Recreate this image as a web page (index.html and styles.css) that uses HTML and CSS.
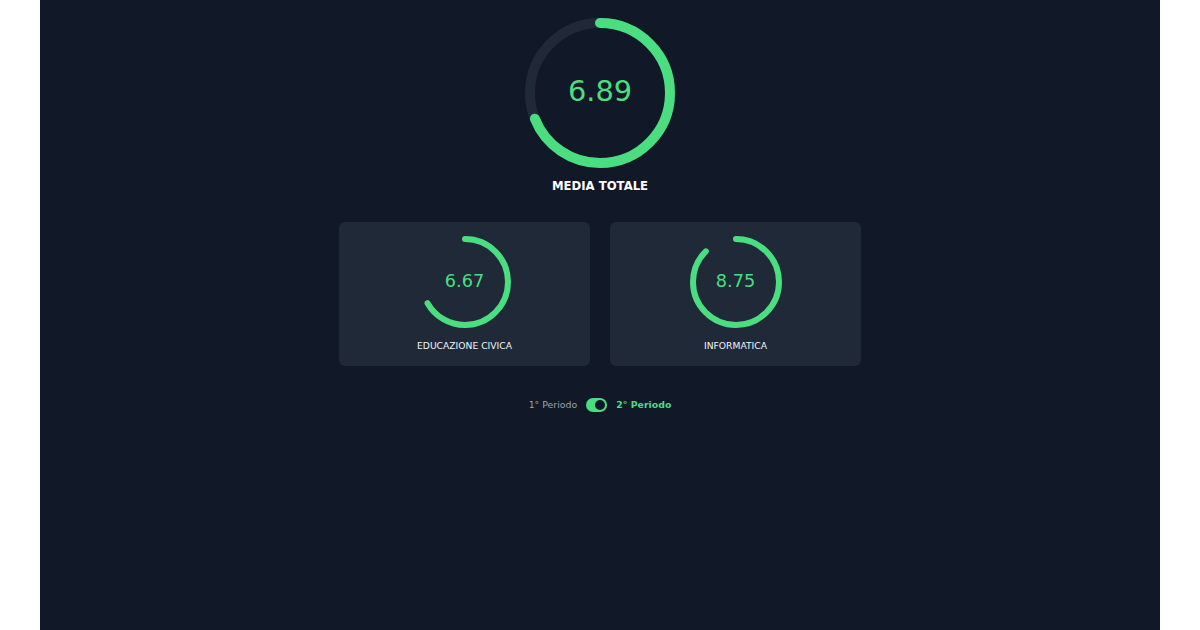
FILE: index.html
```html
<!DOCTYPE html>
<html lang="it">
<head>
<meta charset="utf-8">
<title>Media</title>
<link rel="stylesheet" href="styles.css">
</head>
<body>
<main class="app">
  <section class="total">
    <div class="ring ring-big">
      <svg width="150" height="150" viewBox="0 0 150 150">
        <circle class="track" cx="75" cy="75" r="70" stroke-width="10" fill="none"/>
        <circle class="bar" cx="75" cy="75" r="70" stroke-width="10" fill="none" stroke-dasharray="303.04 439.82" transform="rotate(-90 75 75)"/>
      </svg>
      <span class="value value-big">6.89</span>
    </div>
    <div class="total-label">MEDIA TOTALE</div>
  </section>

  <section class="cards">
    <div class="card">
      <div class="ring ring-small">
        <svg width="94" height="94" viewBox="0 0 94 94">
          <circle class="track-card" cx="47" cy="47" r="43" stroke-width="6" fill="none"/>
          <circle class="bar" cx="47" cy="47" r="43" stroke-width="6" fill="none" stroke-dasharray="180.2 270.18" transform="rotate(-90 47 47)"/>
        </svg>
        <span class="value value-small">6.67</span>
      </div>
      <div class="card-label">EDUCAZIONE CIVICA</div>
    </div>
    <div class="card">
      <div class="ring ring-small">
        <svg width="94" height="94" viewBox="0 0 94 94">
          <circle class="track-card" cx="47" cy="47" r="43" stroke-width="6" fill="none"/>
          <circle class="bar" cx="47" cy="47" r="43" stroke-width="6" fill="none" stroke-dasharray="236.4 270.18" transform="rotate(-90 47 47)"/>
        </svg>
        <span class="value value-small">8.75</span>
      </div>
      <div class="card-label">INFORMATICA</div>
    </div>
  </section>

  <section class="period">
    <span class="period-off">1° Periodo</span>
    <span class="switch"><span class="knob"></span></span>
    <span class="period-on">2° Periodo</span>
  </section>
</main>
</body>
</html>
```

FILE: styles.css
```css
html, body {
  margin: 0;
  padding: 0;
  background: #ffffff;
}

body {
  font-family: "DejaVu Sans", "Liberation Sans", sans-serif;
}

.app {
  width: 1120px;
  min-height: 630px;
  margin: 0 auto;
  background: #111827;
  display: flex;
  flex-direction: column;
  align-items: center;
  padding-top: 18px;
  box-sizing: border-box;
}

.total {
  display: flex;
  flex-direction: column;
  align-items: center;
}

.ring {
  position: relative;
  display: flex;
  align-items: center;
  justify-content: center;
}

.ring svg {
  display: block;
}

.track {
  stroke: #1f2937;
}

.track-card {
  stroke: #1f2937;
}

.bar {
  stroke: #4ade80;
  stroke-linecap: round;
}

.value {
  position: absolute;
  color: #4ade80;
  line-height: 1;
}

.value-big {
  font-size: 28.8px;
  margin-top: -4px;
}

.value-small {
  font-size: 17.7px;
  margin-top: -1px;
}

.total-label {
  margin-top: 10px;
  color: #ffffff;
  font-weight: bold;
  font-size: 11.7px;
  line-height: 16px;
}

.cards {
  margin-top: 28px;
  display: grid;
  grid-template-columns: 251px 251px;
  gap: 20px;
}

.card {
  background: #1f2937;
  border-radius: 6px;
  height: 144px;
  box-sizing: border-box;
  padding-top: 13px;
  display: flex;
  flex-direction: column;
  align-items: center;
}

.card-label {
  margin-top: 11px;
  color: #f3f4f6;
  font-size: 9.2px;
  line-height: 12px;
}

.period {
  margin-top: 32px;
  display: flex;
  align-items: center;
  gap: 9px;
  font-size: 9.4px;
  line-height: 14px;
}

.period-off {
  color: #9ca3af;
}

.period-on {
  color: #4ade80;
  font-weight: bold;
}

.switch {
  width: 21px;
  height: 14px;
  border-radius: 7px;
  background: #4ade80;
  box-sizing: border-box;
  padding: 2px;
  display: flex;
  justify-content: flex-end;
}

.knob {
  width: 10px;
  height: 10px;
  border-radius: 50%;
  background: #111827;
}
```
